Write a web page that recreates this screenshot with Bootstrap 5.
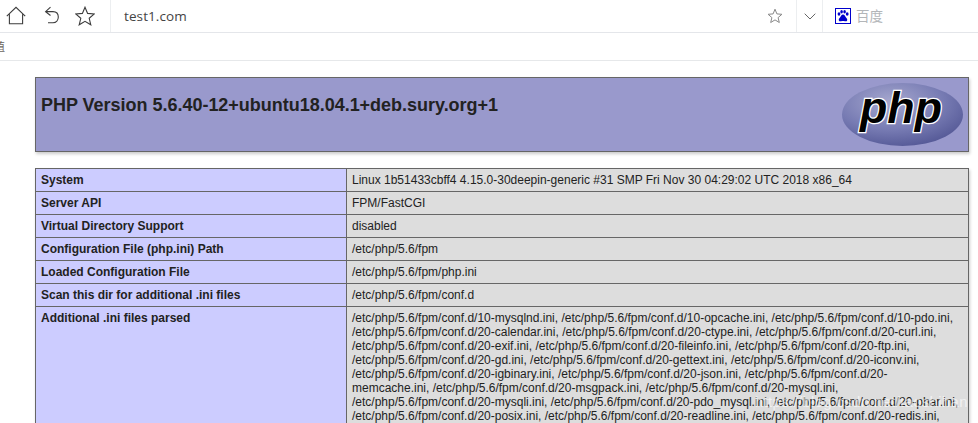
<!DOCTYPE html>
<html lang="en">
<head>
<meta charset="utf-8">
<title>phpinfo()</title>
<link href="https://cdn.jsdelivr.net/npm/bootstrap@5.3.0/dist/css/bootstrap.min.css" rel="stylesheet">
<style>
html,body{height:423px;overflow:hidden;background:#fff}
body{position:relative;font-family:"Liberation Sans",Arial,sans-serif}
.topbar{height:33px;border-bottom:1px solid #e4e6ea;font-family:"Noto Sans","Noto Sans CJK SC",sans-serif}
.navgroup{width:111px;height:32px;border-right:1px solid #eceef0;padding-left:6px}
.navgroup svg,.paw{display:block}
.undoicon{margin-left:17px}
.staricon{margin-left:14px}
.urltext{font-family:"Open Sans","Noto Sans",sans-serif;font-size:13.5px;color:#444;padding-left:13px;flex:1;letter-spacing:.1px}
.favstar{margin-right:13px}
.dropcell{width:27px;height:32px;border-left:1px solid #eceef0;border-right:1px solid #eceef0}
.searchcell{width:155px;padding-left:12px;gap:5px;font-size:13.5px;color:#b3b6b9}
.favbar{height:28px;border-bottom:1px solid #e6e8ea;font-family:"Noto Sans CJK SC",sans-serif;font-size:11px;color:#6b6660;margin-left:-6px;padding-left:0}
.favwrap{overflow:hidden}
.phpwrap{padding:16px 9px 0 35px;color:#222}
.phphead{height:75px;background:#99c;border:1px solid #666;box-shadow:1px 2px 3px #ccc;padding:0 3px 0 5px}
.phphead h1{font-size:18px;font-weight:700;line-height:21px;margin:17px 0 0;color:#222;letter-spacing:-.02px}
.phplogo{margin-top:4px;margin-right:1px}
.phptable{width:100%;margin-top:16px;border-collapse:collapse;table-layout:fixed;font-size:12px;line-height:14px;box-shadow:1px 2px 3px #ccc}
.phptable td{border:1px solid #666;padding:4px 5px;vertical-align:baseline;color:#222}
.phptable .keycol{background:#ccf;font-weight:700;width:311px}
.phptable .valcol{background:#ddd;word-break:normal}
.mark-water{position:absolute;left:755px;top:391px;font-size:15px;letter-spacing:.3px;color:rgba(255,255,255,.6);white-space:nowrap;font-family:"Liberation Sans",sans-serif}
</style>
</head>
<body>
<div class="topbar d-flex align-items-center">
  <div class="navgroup d-flex align-items-center">
    <svg width="20" height="20" viewBox="0 0 20 20" fill="none" stroke="#3d3d3d" stroke-width="1.1"><path d="M.8 10.2 10 1.3l9.2 8.9M3.4 8.2v9.6h13.2V8.2"/></svg>
    <svg class="undoicon" width="18" height="20" viewBox="0 0 18 20" fill="none" stroke="#3d3d3d" stroke-width="1.1"><path d="M7.5 1.2 2.6 5.6l4.9 3.9M2.8 5.6h7.2c3.6 0 5.3 2.4 5.3 5.5s-2.1 5.7-5.3 5.7H5"/></svg>
    <svg class="staricon" width="20" height="20" viewBox="0 0 20 20" fill="none" stroke="#3d3d3d" stroke-width="1.1"><path d="M10 1.2 12.6 7.4l6.7.5-5.1 4.4 1.6 6.5L10 15.3l-5.8 3.5 1.6-6.5L.7 7.9l6.7-.5z"/></svg>
  </div>
  <div class="urltext">test1.com</div>
  <svg class="favstar" width="16" height="16" viewBox="0 0 16 16" fill="none" stroke="#888" stroke-width="1"><path d="M8 1.2 9.9 5.9l5 .4-3.8 3.3 1.2 4.9L8 11.9l-4.3 2.6 1.2-4.9L1.1 6.3l5-.4z"/></svg>
  <div class="dropcell d-flex align-items-center justify-content-center">
    <svg width="12" height="7" viewBox="0 0 12 7" fill="none" stroke="#666" stroke-width="1"><path d="M.7.7 6 6l5.3-5.3"/></svg>
  </div>
  <div class="searchcell d-flex align-items-center">
    <svg class="paw" width="16" height="16" viewBox="0 0 16 16"><rect x=".5" y=".5" width="15" height="15" fill="#fff" stroke="#00c"/><g fill="#00c"><ellipse cx="4" cy="6" rx="1.4" ry="1.8"/><ellipse cx="6.6" cy="3.8" rx="1.3" ry="1.7"/><ellipse cx="9.6" cy="3.8" rx="1.3" ry="1.7"/><ellipse cx="12.2" cy="6" rx="1.4" ry="1.8"/><path d="M8 6.6c1.6 0 2 1.7 3 2.8.9 1 1.4 1.6 1.2 2.8-.2 1-1.4 1.3-2.2 1.1-.8-.2-1.4-.3-2-.3s-1.2.1-2 .3c-.8.2-2-.1-2.2-1.1-.2-1.2.3-1.8 1.2-2.8 1-1.1 1.4-2.8 3-2.8z"/></g></svg>
    <span>百度</span>
  </div>
</div>
<div class="favwrap"><div class="favbar d-flex align-items-center">值</div></div>
<div class="phpwrap">
  <div class="phphead d-flex justify-content-between align-items-start">
    <h1>PHP Version 5.6.40-12+ubuntu18.04.1+deb.sury.org+1</h1>
    <svg class="phplogo" width="123" height="65" viewBox="0 0 123 65">
      <defs><radialGradient id="phpgrad" cx=".4" cy=".3" r=".8"><stop offset="0" stop-color="#a6a8cf"/><stop offset=".55" stop-color="#777bb3"/><stop offset="1" stop-color="#4d5190"/></radialGradient></defs>
      <ellipse cx="61.5" cy="32.5" rx="60.5" ry="31.5" fill="url(#phpgrad)"/>
      <text x="60" y="41" text-anchor="middle" font-family="Liberation Sans,Arial,sans-serif" font-size="45" font-weight="700" font-style="italic" fill="#000" stroke="#fff" stroke-width="2.6" paint-order="stroke" textLength="82" lengthAdjust="spacingAndGlyphs">php</text>
    </svg>
  </div>
  <table class="phptable">
    <tbody>
      <tr><td class="keycol">System</td><td class="valcol">Linux 1b51433cbff4 4.15.0-30deepin-generic #31 SMP Fri Nov 30 04:29:02 UTC 2018 x86_64</td></tr>
      <tr><td class="keycol">Server API</td><td class="valcol">FPM/FastCGI</td></tr>
      <tr><td class="keycol">Virtual Directory Support</td><td class="valcol">disabled</td></tr>
      <tr><td class="keycol">Configuration File (php.ini) Path</td><td class="valcol">/etc/php/5.6/fpm</td></tr>
      <tr><td class="keycol">Loaded Configuration File</td><td class="valcol">/etc/php/5.6/fpm/php.ini</td></tr>
      <tr><td class="keycol">Scan this dir for additional .ini files</td><td class="valcol">/etc/php/5.6/fpm/conf.d</td></tr>
      <tr><td class="keycol">Additional .ini files parsed</td><td class="valcol">/etc/php/5.6/fpm/conf.d/10-mysqlnd.ini, /etc/php/5.6/fpm/conf.d/10-opcache.ini, /etc/php/5.6/fpm/conf.d/10-pdo.ini, /etc/php/5.6/fpm/conf.d/20-calendar.ini, /etc/php/5.6/fpm/conf.d/20-ctype.ini, /etc/php/5.6/fpm/conf.d/20-curl.ini, /etc/php/5.6/fpm/conf.d/20-exif.ini, /etc/php/5.6/fpm/conf.d/20-fileinfo.ini, /etc/php/5.6/fpm/conf.d/20-ftp.ini, /etc/php/5.6/fpm/conf.d/20-gd.ini, /etc/php/5.6/fpm/conf.d/20-gettext.ini, /etc/php/5.6/fpm/conf.d/20-iconv.ini, /etc/php/5.6/fpm/conf.d/20-igbinary.ini, /etc/php/5.6/fpm/conf.d/20-json.ini, /etc/php/5.6/fpm/conf.d/20-memcache.ini, /etc/php/5.6/fpm/conf.d/20-msgpack.ini, /etc/php/5.6/fpm/conf.d/20-mysql.ini, /etc/php/5.6/fpm/conf.d/20-mysqli.ini, /etc/php/5.6/fpm/conf.d/20-pdo_mysql.ini, /etc/php/5.6/fpm/conf.d/20-phar.ini, /etc/php/5.6/fpm/conf.d/20-posix.ini, /etc/php/5.6/fpm/conf.d/20-readline.ini, /etc/php/5.6/fpm/conf.d/20-redis.ini, /etc/php/5.6/fpm/conf.d/20-shmop.ini, /etc/php/5.6/fpm/conf.d/20-simplexml.ini</td></tr>
    </tbody>
  </table>
</div>
<div class="mark-water">https://blog.csdn.net/taoshihan</div>
</body>
</html>
